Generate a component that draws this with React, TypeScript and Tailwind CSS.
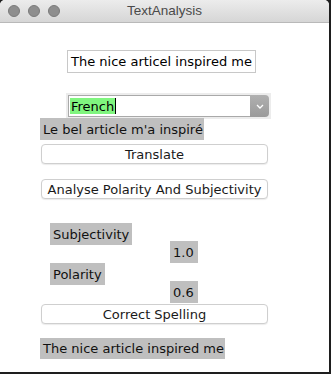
import React from "react";

const font = { fontFamily: '"DejaVu Sans", Verdana, sans-serif' };

function Btn({ label }: { label: string }) {
  return (
    <div className="ml-[41px] w-[227px] h-[20px] flex items-center justify-center bg-white border border-[#cfcfcf] rounded-[4px] shadow-[0_1px_1px_rgba(0,0,0,0.08)] text-[13px] text-[#1a1a1a] leading-none">
      {label}
    </div>
  );
}

function Lbl({ text, x, w, h = 22, mt }: { text: string; x: string; w: string; h?: number; mt: string }) {
  return (
    <div className={`${mt} ${x} ${w} bg-[#bfbfbf] flex items-center pl-[3px] text-[13px] text-[#111] leading-none whitespace-nowrap`} style={{ height: h }}>
      {text}
    </div>
  );
}

export default function App() {
  return (
    <div className="w-[331px] h-[374px] bg-[#1e1e1e]" style={font}>
      <div className="w-[329px] h-[372px] bg-white rounded-t-[5px] overflow-hidden flex flex-col">
        <div className="h-[23px] shrink-0 bg-gradient-to-b from-[#ececec] to-[#d6d6d6] border-b border-[#b9b9b9] relative flex items-center justify-center">
          <div className="absolute left-[8px] top-[5px] flex gap-[8px]">
            <div className="w-[12px] h-[12px] rounded-full bg-[#8e8e8e] border border-[#7a7a7a]" />
            <div className="w-[12px] h-[12px] rounded-full bg-[#8e8e8e] border border-[#7a7a7a]" />
            <div className="w-[12px] h-[12px] rounded-full bg-[#8e8e8e] border border-[#7a7a7a]" />
          </div>
          <span className="text-[13.5px] text-[#4a4a4a] leading-none font-['Liberation_Sans',Arial,sans-serif]">TextAnalysis</span>
        </div>
        <div className="flex flex-col items-start">
          <div className="mt-[27px] ml-[67px] w-[189px] h-[23px] border border-[#c8c8c8] flex items-center pl-[3px] text-[13px] text-black leading-none whitespace-nowrap">
            The nice articel inspired me
          </div>
          <div className="mt-[20px] ml-[66px] w-[205px] h-[26px] bg-[#ececec] p-[2px] flex">
            <div className="flex-1 bg-white border border-[#a9a9a9] border-r-0 flex items-center pl-[1px]">
              <span className="bg-[#80f57f] text-[13px] text-black leading-none h-[16px] flex items-center pl-[1px] pr-[1px]">French</span>
              <span className="w-[1px] h-[16px] bg-black" />
            </div>
            <div className="w-[19px] rounded-r-[4px] bg-gradient-to-b from-[#b0b0b0] to-[#9a9a9a] flex items-center justify-center">
              <svg width="8" height="5" viewBox="0 0 8 5">
                <path d="M1 1 L4 4 L7 1" stroke="white" strokeWidth="1.3" fill="none" />
              </svg>
            </div>
          </div>
          <Lbl text="Le bel article m'a inspiré" x="ml-[40px]" w="w-[164px]" mt="-mt-[1px]" />
          <div className="mt-[4px]"><Btn label="Translate" /></div>
          <div className="mt-[15px]"><Btn label="Analyse Polarity And Subjectivity" /></div>
          <Lbl text="Subjectivity" x="ml-[50px]" w="w-[82px]" mt="mt-[24px]" />
          <Lbl text="1.0" x="ml-[170px]" w="w-[28px]" mt="-mt-[4px]" />
          <Lbl text="Polarity" x="ml-[50px]" w="w-[55px]" mt="mt-0" />
          <Lbl text="0.6" x="ml-[170px]" w="w-[28px]" mt="-mt-[4px]" />
          <div className="mt-[1px]"><Btn label="Correct Spelling" /></div>
          <Lbl text="The nice article inspired me" x="ml-[40px]" w="w-[185px]" h={21} mt="mt-[14px]" />
        </div>
      </div>
    </div>
  );
}
